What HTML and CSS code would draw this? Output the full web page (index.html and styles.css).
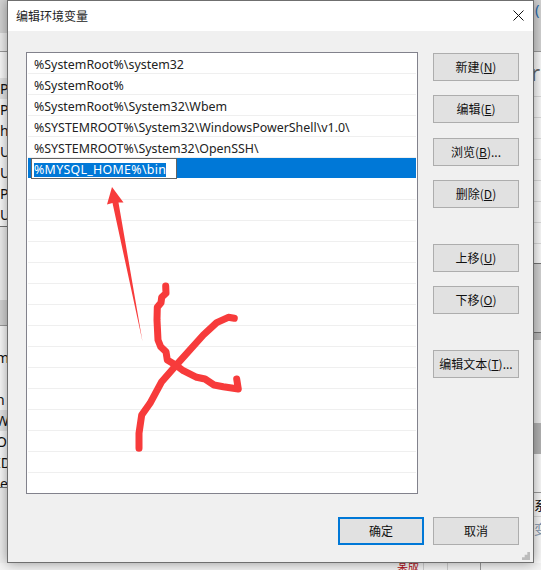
FILE: index.html
```html
<!DOCTYPE html>
<html lang="zh-CN">
<head>
<meta charset="utf-8">
<title>编辑环境变量</title>
<link rel="stylesheet" href="styles.css">
</head>
<body>
<div class="desktop">
  <div class="main">
    <div class="strip strip-left">
      <div class="s33 band"></div>
      <div class="s19 band-light ruled"></div>
      <div class="s26"></div>
      <div class="row row-hi">Pr</div>
      <div class="row">Pr</div>
      <div class="row">h</div>
      <div class="row">U</div>
      <div class="row">U</div>
      <div class="row">Pr</div>
      <div class="row">U</div>
      <div class="s2 ruled-dark"></div>
      <div class="s73 band-light"></div>
      <div class="s26 band ruled"></div>
      <div class="row"></div>
      <div class="row tail">m</div>
      <div class="row"></div>
      <div class="row tail">n</div>
      <div class="row row-hi tail">W</div>
      <div class="row tail">ON</div>
      <div class="row tail">ID</div>
      <div class="s15 ruled-dark">el</div>
      <div class="fill band-light"></div>
    </div>

    <div class="dialog">
      <div class="titlebar">
        <span class="title">编辑环境变量</span>
        <svg class="close" viewBox="0 0 11 11" aria-label="关闭"><path d="M.5.5l10 10M10.5.5l-10 10"/></svg>
      </div>
      <div class="client">
        <div class="list">
          <div class="item">%SystemRoot%\system32</div>
          <div class="item">%SystemRoot%</div>
          <div class="item">%SystemRoot%\System32\Wbem</div>
          <div class="item">%SYSTEMROOT%\System32\WindowsPowerShell\v1.0\</div>
          <div class="item">%SYSTEMROOT%\System32\OpenSSH\</div>
          <div class="item item-selected"><span class="editbox"><span class="selected-text">%MYSQL_HOME%\bin</span></span></div>
          <div class="item"></div><div class="item"></div><div class="item"></div><div class="item"></div>
          <div class="item"></div><div class="item"></div><div class="item"></div><div class="item"></div>
          <div class="item"></div><div class="item"></div><div class="item"></div><div class="item"></div>
          <div class="item"></div><div class="item"></div><div class="item"></div>
        </div>
        <div class="actions">
          <button class="btn">新建(<u>N</u>)</button>
          <button class="btn">编辑(<u>E</u>)</button>
          <button class="btn">浏览(<u>B</u>)...</button>
          <button class="btn">删除(<u>D</u>)</button>
          <button class="btn gap-large">上移(<u>U</u>)</button>
          <button class="btn">下移(<u>O</u>)</button>
          <button class="btn gap-large">编辑文本(<u>T</u>)...</button>
        </div>
      </div>
      <div class="footer">
        <button class="btn btn-default">确定</button>
        <button class="btn">取消</button>
      </div>
      <svg class="grip" viewBox="0 0 9 9"><path d="M6 0h3v3H6zM3 3h3v3H3zM6 3h3v3H6zM0 6h3v3H0zM3 6h3v3H3zM6 6h3v3H6z"/></svg>
      <svg class="marks" viewBox="7 0 527 563">
        <path class="arrow" d="M112 187L123.500 202.500L118.500 202.500L142.500 341.500L112.500 203L107 204.500Z"/>
        <path class="scrawl" d="M165.700 286L166 293.300L161.700 297.300L161 302.700L157.300 307.300L157 320L158 340L160.700 346.700L166 351.700L167.300 360L176 365.300L183.300 370.700L196.700 377.300L205 379L214 385L223.300 386.700L238.300 389L236.700 379"/>
        <path class="scrawl" d="M234.300 318.300L228.300 317.300L216.700 322.700L203.300 335L176 365.300L161.700 381.700L150 403.300L141.700 415L139 433.300L139 448.300"/>
      </svg>
    </div>

    <div class="strip strip-right">
      <div class="s52 band ruled"><span class="peek-blue">(</span></div>
      <div class="s45 ruled-soft"><span class="peek-dark">r</span></div>
      <div class="row ruled-soft"></div><div class="row ruled-soft"></div><div class="row ruled-soft"></div><div class="row ruled-soft"></div>
      <div class="row ruled-soft"></div><div class="row ruled-soft"></div><div class="row ruled-soft"></div>
      <div class="s20 ruled-dark"></div>
      <div class="s69 band ruled-dark"></div>
      <div class="s7 band-mid"></div>
      <div class="s83 band-light"></div>
      <div class="s31 band-dark"></div>
      <div class="s5"></div>
      <div class="s34 ruled"></div>
      <div class="s24 ruled-soft"><span class="peek-cjk">系</span></div>
      <div class="s26"><span class="peek-cjk peek-faint">变</span></div>
      <div class="fill"></div>
    </div>
  </div>
  <div class="bottom">
    <span class="bottom-label">某版</span>
    <i class="tick tick-a"></i><i class="tick tick-b"></i><i class="tick tick-c"></i>
  </div>
</div>
</body>
</html>
```
FILE: styles.css
```css
* { box-sizing: border-box; }
html, body { margin: 0; padding: 0; background: #f4f4f4; }
body { font-family: "Noto Sans", "Noto Sans CJK SC", sans-serif; font-size: 12px; color: #111; }

.desktop { width: 541px; height: 570px; overflow: hidden; display: flex; flex-direction: column; background: #f6f6f6; }
.main { display: flex; height: 563px; flex: none; }

/* window behind the dialog */
.strip { flex: none; width: 7px; height: 563px; overflow: hidden; display: flex; flex-direction: column; background: #fbfbfb; font-size: 14px; white-space: nowrap; }
.strip-right { width: 7px; }
.strip > div { flex: none; }
.strip > .fill { flex: 1; }
.s2 { height: 2px; } .s5 { height: 5px; } .s7 { height: 7px; } .s15 { height: 15px; line-height: 21px; overflow: hidden; }
.s19 { height: 19px; } .s20 { height: 20px; } .s24 { height: 24px; } .s26 { height: 26px; } .s31 { height: 31px; }
.s33 { height: 33px; } .s34 { height: 34px; } .s45 { height: 45px; } .s52 { height: 52px; } .s69 { height: 69px; }
.s73 { height: 73px; } .s83 { height: 83px; }
.row { height: 21px; line-height: 21px; }
.row.tail { text-indent: -4px; }
.row-hi { background: #e6e6e6; }
.band { background: #d4d4d4; }
.band-light { background: #efefef; }
.band-mid { background: #b9b9b9; }
.band-dark { background: #b4b4b4; }
.ruled { border-bottom: 1px solid #9c9c9c; }
.ruled-soft { border-bottom: 1px solid #dcdcdc; }
.ruled-dark { border-bottom: 1px solid #747474; }
.peek-blue { color: #2a6db0; font-size: 15px; line-height: 18px; display: block; margin-left: 1px; }
.peek-dark { color: #666; font-size: 22px; line-height: 40px; display: block; margin-left: -3px; }
.peek-cjk { font-family: "Noto Sans CJK SC", sans-serif; font-size: 13px; line-height: 24px; display: block; }
.peek-faint { color: #7d95ad; }

/* dialog */
.dialog { position: relative; z-index: 1; flex: none; width: 527px; height: 563px; background: #f0f0f0; border: 1px solid #6f6f6f; box-shadow: 0 0 12px rgba(0,0,0,.4); display: flex; flex-direction: column; }
.titlebar { flex: none; height: 30px; background: #fff; display: flex; align-items: center; justify-content: space-between; padding: 0 9px 2px 8px; }
.title { font-family: "Noto Sans CJK SC", sans-serif; font-size: 12px; color: #222; }
.close { width: 11px; height: 11px; fill: none; stroke: #111; stroke-width: 1; }

.client { flex: none; display: flex; align-items: flex-start; padding: 21px 14px 0 18px; gap: 15px; }
.list { flex: none; width: 392px; height: 442px; background: #fff; border: 1px solid #82828c; padding: 0 1px; overflow: hidden; }
.item { height: 21px; border-bottom: 1px solid #efefef; padding-left: 6px; line-height: 24px; font-size: 12.400px; white-space: nowrap; color: #222; }
.item-selected { background: #0078d7; border-bottom: 1px solid #fff; padding-left: 3px; }
.editbox { display: block; width: 146px; height: 21px; background: #fff; border: 1px solid #646464; padding: 4px 0 0 2px; line-height: 14px; }
.selected-text { display: inline-block; height: 14px; background: #0078d7; color: #fff; letter-spacing: .3px; }

.actions { flex: none; width: 86px; display: flex; flex-direction: column; gap: 14.300px; padding-top: 1px; }
.btn { flex: none; width: 86px; height: 28px; margin: 0; padding: 0; background: #e1e1e1; border: 1px solid #adadad; border-radius: 0; color: #111; font: 12px "Noto Sans CJK SC", "Noto Sans", sans-serif; line-height: 26px; white-space: nowrap; }
.btn u { text-underline-offset: 1px; }
.gap-large { margin-top: 22px; }
.actions .btn:last-child { margin-top: 21px; }
.footer { flex: none; display: flex; justify-content: flex-end; gap: 9px; padding: 23px 14px 0 0; }
.btn-default { border: 2px solid #0078d7; line-height: 24px; }

.grip { position: absolute; right: 3px; bottom: 2px; width: 8px; height: 8px; fill: #bcbcbc; }
.marks { position: absolute; left: -1px; top: -1px; width: 527px; height: 563px; pointer-events: none; overflow: visible; }
.arrow { fill: #f73b3b; }
.scrawl { fill: none; stroke: #f73b3b; stroke-width: 7; stroke-linecap: round; stroke-linejoin: round; }

/* bottom edge of the window behind */
.bottom { flex: none; height: 7px; position: relative; background: #f4f4f4; overflow: hidden; }
.bottom-label { position: absolute; left: 397px; top: -5px; font-family: "Noto Sans CJK SC", sans-serif; font-size: 11px; line-height: 14px; color: #b01020; }
.tick { position: absolute; top: 0; width: 1px; height: 7px; background: #cfcfcf; }
.tick-a { left: 423px; } .tick-b { left: 447px; } .tick-c { left: 480px; background: #9a9a9a; }
```
